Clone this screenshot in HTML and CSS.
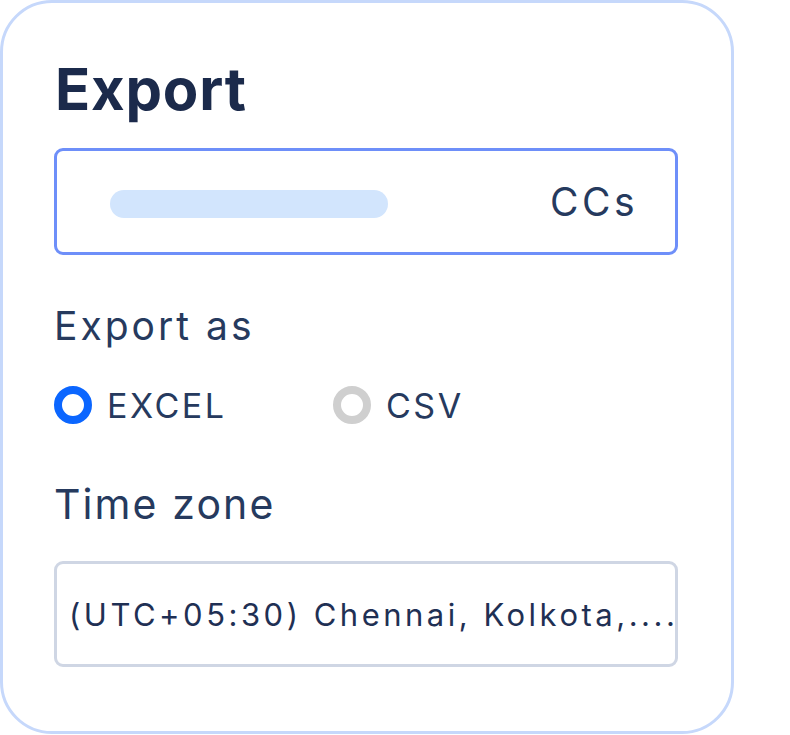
FILE: index.html
```html
<!DOCTYPE html>
<html>
<head>
<meta charset="utf-8">
<link rel="stylesheet" href="styles.css">
</head>
<body>
<div class="card">
  <h1 class="title">Export</h1>
  <div class="picker">
    <span class="pill"></span>
    <span class="picker-label">CCs</span>
  </div>
  <div class="label label-as">Export as</div>
  <div class="radios">
    <label class="radio"><span class="dot dot-on"></span><span>EXCEL</span></label>
    <label class="radio"><span class="dot"></span><span>CSV</span></label>
  </div>
  <div class="label label-tz">Time zone</div>
  <div class="select">(UTC+05:30) Chennai, Kolkota,....</div>
</div>
</body>
</html>
```

FILE: styles.css
```css
html, body {
  margin: 0;
  padding: 0;
  background: #ffffff;
}
body {
  font-family: Inter, "Noto Sans", sans-serif;
  color: #263a5e;
}
.card {
  box-sizing: border-box;
  width: 734px;
  height: 734px;
  border: 3px solid #c6d8fb;
  border-radius: 52px;
  padding: 51px 51px 0 51px;
}
.title {
  margin: 0;
  font-size: 58px;
  line-height: 70px;
  font-weight: 700;
  letter-spacing: 0.8px;
  color: #1b2a4b;
  padding-left: 1px;
}
.picker {
  box-sizing: border-box;
  margin-top: 24px;
  width: 624px;
  height: 107px;
  border: 3px solid #6e8ff9;
  border-radius: 9px;
  display: flex;
  align-items: center;
  justify-content: space-between;
  padding: 0 37px 0 53px;
}
.pill {
  width: 278px;
  height: 28px;
  border-radius: 14px;
  background: #d2e5fd;
  margin-top: 5px;
}
.picker-label {
  font-size: 39px;
  letter-spacing: 3.5px;
  color: #263a5e;
}
.label {
  color: #263a5e;
}
.label-as {
  margin-top: 48px;
  font-size: 39px;
  line-height: 46px;
  letter-spacing: 3px;
}
.radios {
  display: flex;
  margin-top: 36px;
  height: 40px;
  align-items: center;
}
.radio {
  display: flex;
  align-items: center;
  gap: 15px;
  font-size: 34px;
  letter-spacing: 2.5px;
  width: 279px;
}
.dot {
  box-sizing: border-box;
  width: 38px;
  height: 38px;
  border-radius: 50%;
  border: 8px solid #cfcfcf;
}
.dot-on {
  border-color: #0b66ff;
}
.label-tz {
  margin-top: 55px;
  font-size: 41px;
  line-height: 48px;
  letter-spacing: 2.1px;
}
.select {
  box-sizing: border-box;
  margin-top: 33px;
  width: 624px;
  height: 106px;
  border: 3px solid #cfd6e4;
  border-radius: 9px;
  display: flex;
  align-items: center;
  padding: 0 6px 0 12px;
  font-size: 31px;
  letter-spacing: 3.5px;
  color: #1f3054;
  white-space: nowrap;
  overflow: hidden;
}
```
